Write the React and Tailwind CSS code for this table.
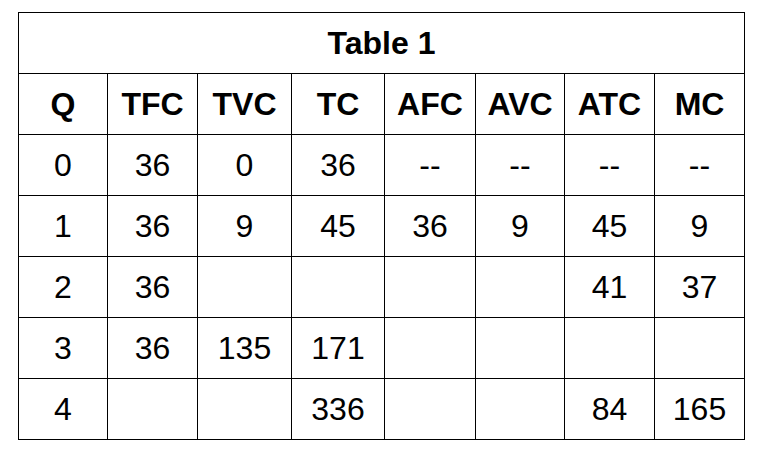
export default function App() {
  const header = ["Q", "TFC", "TVC", "TC", "AFC", "AVC", "ATC", "MC"];
  const rows = [
    ["0", "36", "0", "36", "--", "--", "--", "--"],
    ["1", "36", "9", "45", "36", "9", "45", "9"],
    ["2", "36", "", "", "", "", "41", "37"],
    ["3", "36", "135", "171", "", "", "", ""],
    ["4", "", "", "336", "", "", "84", "165"],
  ];
  const widths = ["w-[89px]", "w-[90px]", "w-[94px]", "w-[93px]", "w-[91px]", "w-[89px]", "w-[90px]", "w-[90px]"];
  return (
    <div className="w-[760px] h-[473px] bg-white pl-[18px] pt-[12px] text-black" style={{ fontFamily: '"Liberation Sans", Arial, sans-serif' }}>
      <table className="table-fixed border-collapse w-[726px] text-[32px] leading-none">
        <colgroup>
          {widths.map((w, i) => (
            <col key={i} className={w} />
          ))}
        </colgroup>
        <tbody>
          <tr className="h-[61px]">
            <td colSpan={8} className="border border-black text-center align-middle font-bold p-0">
              Table 1
            </td>
          </tr>
          <tr className="h-[61px]">
            {header.map((h, i) => (
              <td key={i} className="border border-black text-center align-middle font-bold p-0">
                {h}
              </td>
            ))}
          </tr>
          {rows.map((r, ri) => (
            <tr key={ri} className="h-[61px]">
              {r.map((c, ci) => (
                <td key={ci} className="border border-black text-center align-middle p-0">
                  {c}
                </td>
              ))}
            </tr>
          ))}
        </tbody>
      </table>
    </div>
  );
}
